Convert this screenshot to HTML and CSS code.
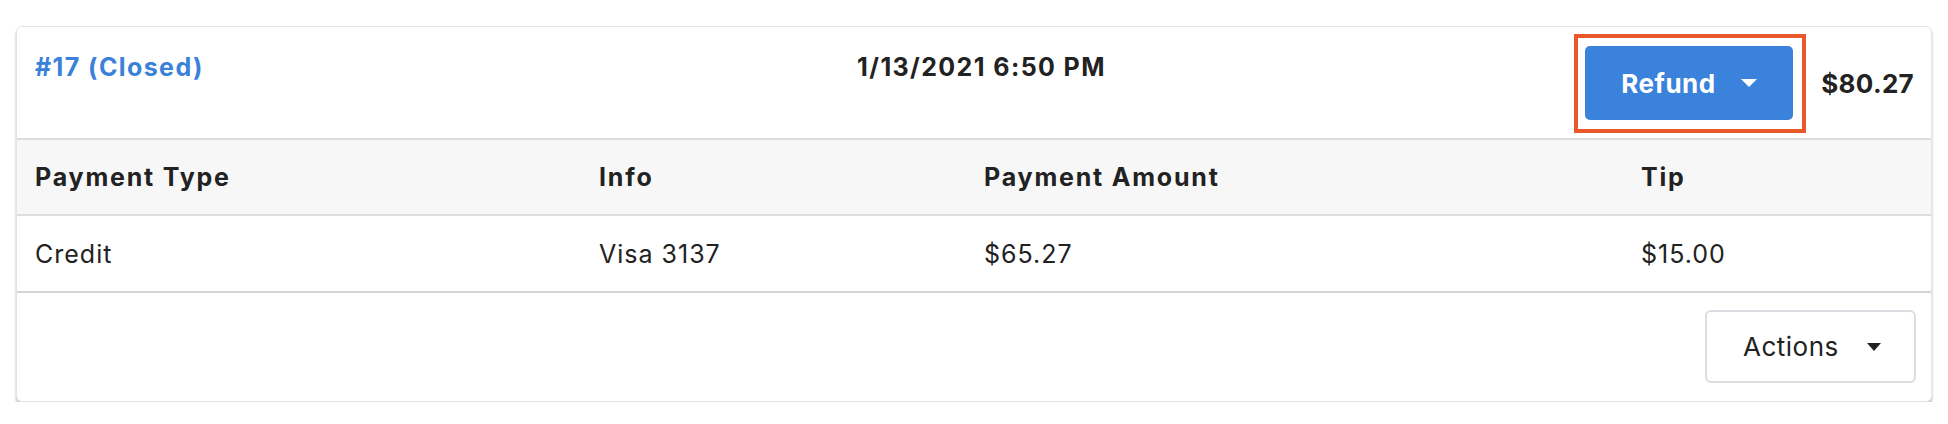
FILE: index.html
```html
<!DOCTYPE html>
<html>
<head>
<meta charset="utf-8">
<link rel="stylesheet" href="styles.css">
</head>
<body>
<div class="card">
  <div class="card-head">
    <a class="check-link" href="#">#17 (Closed)</a>
    <div class="date">1/13/2021 6:50 PM</div>
    <div class="head-right">
      <div class="highlight">
        <button class="btn-refund">Refund <span class="caret caret-white"></span></button>
      </div>
      <div class="total">$80.27</div>
    </div>
  </div>
  <div class="table">
    <div class="row row-head">
      <div class="cell">Payment Type</div>
      <div class="cell">Info</div>
      <div class="cell">Payment Amount</div>
      <div class="cell">Tip</div>
    </div>
    <div class="row row-data">
      <div class="cell">Credit</div>
      <div class="cell">Visa 3137</div>
      <div class="cell">$65.27</div>
      <div class="cell">$15.00</div>
    </div>
  </div>
  <div class="card-foot">
    <button class="btn-actions">Actions <span class="caret caret-dark"></span></button>
  </div>
</div>
</body>
</html>
```
FILE: styles.css
```css
html, body {
  margin: 0;
  padding: 0;
  background: #ffffff;
}
body {
  padding: 26px 17px 0 16px;
  font-family: Inter, "Liberation Sans", sans-serif;
  color: #222222;
}
.card {
  width: 1914px;
  border: 1px solid #e4e4e4;
  border-radius: 6px;
  box-shadow: 0 3px 3px rgba(0, 0, 0, 0.25);
  background: #ffffff;
  overflow: hidden;
}
.card-head {
  display: grid;
  grid-template-columns: 1fr auto 1fr;
  align-items: start;
  padding: 7px 17px 5px 18px;
  border-bottom: 2px solid #dedede;
}
.check-link {
  color: #3a81d9;
  font-weight: 700;
  font-size: 25px;
  line-height: 42px;
  letter-spacing: 1.4px;
  text-decoration: none;
  margin-top: 12px;
}
.date {
  font-weight: 700;
  font-size: 25px;
  line-height: 42px;
  letter-spacing: 1.4px;
  padding-left: 14px;
  margin-top: 12px;
}
.head-right {
  display: flex;
  align-items: center;
  justify-content: flex-end;
  gap: 15px;
}
.highlight {
  border: 4px solid #e8582b;
  padding: 8px 9px 9px 7px;
}
.btn-refund {
  display: flex;
  align-items: center;
  gap: 25px;
  height: 74px;
  width: 208px;
  padding: 0 36px;
  border: none;
  border-radius: 5px;
  background: #3b82dc;
  color: #ffffff;
  font-family: inherit;
  font-weight: 700;
  font-size: 26px;
  letter-spacing: 0.5px;
}
.total {
  font-weight: 700;
  font-size: 26px;
  letter-spacing: 0.3px;
}
.caret {
  display: inline-block;
  width: 0;
  height: 0;
  border-left: 8px solid transparent;
  border-right: 8px solid transparent;
}
.caret-white {
  border-top: 8px solid #ffffff;
}
.caret-dark {
  border-left-width: 7px;
  border-right-width: 7px;
  border-top: 8px solid #222222;
}
.row {
  display: grid;
  grid-template-columns: 564px 385px 657px 1fr;
  padding-left: 18px;
  align-items: center;
}
.row-head {
  height: 74px;
  background: #f7f7f7;
  border-bottom: 2px solid #dddddd;
  font-weight: 700;
  font-size: 25px;
  letter-spacing: 1.8px;
}
.row-data {
  height: 75px;
  border-bottom: 2px solid #d4d4d4;
  font-size: 25px;
  letter-spacing: 1px;
}
.card-foot {
  display: flex;
  justify-content: flex-end;
  padding: 17px 15px 18px 18px;
}
.btn-actions {
  display: flex;
  align-items: center;
  gap: 28px;
  height: 73px;
  width: 211px;
  padding: 0 35px 0 36px;
  border: 2px solid #dcdce2;
  border-radius: 6px;
  background: #ffffff;
  color: #222222;
  font-family: inherit;
  font-size: 26px;
  letter-spacing: 0.5px;
}
```
